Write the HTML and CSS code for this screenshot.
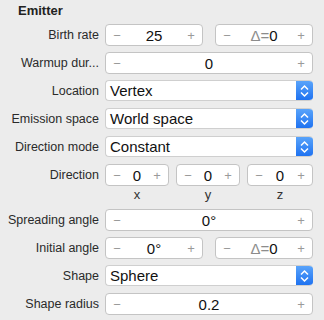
FILE: index.html
```html
<!DOCTYPE html>
<html>
<head>
    <title>Emitter</title>
    <link rel="stylesheet" href="styles.css">
</head>
<body>
<div class="inspector">
    <div class="section-title">Emitter</div>

    <div class="row">
        <label class="row-label">Birth rate</label>
        <div class="pair">
            <div class="stepper"><span class="step">−</span><span class="value">25</span><span class="step">+</span></div>
            <div class="stepper"><span class="step">−</span><span class="value"><span class="dim">Δ=</span>0</span><span class="step">+</span></div>
        </div>
    </div>

    <div class="row">
        <label class="row-label">Warmup dur...</label>
        <div class="stepper"><span class="step">−</span><span class="value">0</span><span class="step">+</span></div>
    </div>

    <div class="row">
        <label class="row-label">Location</label>
        <div class="popup"><span class="popup-text">Vertex</span><span class="popup-arrows"><svg width="17" height="22" viewBox="0 0 17 22"><path d="M5 9.5 L8.5 6 L12 9.5 M5 12.5 L8.5 16 L12 12.5" fill="none" stroke="#fff" stroke-width="1.5"/></svg></span></div>
    </div>

    <div class="row">
        <label class="row-label">Emission space</label>
        <div class="popup"><span class="popup-text">World space</span><span class="popup-arrows"><svg width="17" height="22" viewBox="0 0 17 22"><path d="M5 9.5 L8.5 6 L12 9.5 M5 12.5 L8.5 16 L12 12.5" fill="none" stroke="#fff" stroke-width="1.5"/></svg></span></div>
    </div>

    <div class="row">
        <label class="row-label">Direction mode</label>
        <div class="popup"><span class="popup-text">Constant</span><span class="popup-arrows"><svg width="17" height="22" viewBox="0 0 17 22"><path d="M5 9.5 L8.5 6 L12 9.5 M5 12.5 L8.5 16 L12 12.5" fill="none" stroke="#fff" stroke-width="1.5"/></svg></span></div>
    </div>

    <div class="row row-vector">
        <label class="row-label">Direction</label>
        <div class="triple">
            <div class="axis">
                <div class="stepper"><span class="step">−</span><span class="value">0</span><span class="step">+</span></div>
                <div class="axis-name">x</div>
            </div>
            <div class="axis">
                <div class="stepper"><span class="step">−</span><span class="value">0</span><span class="step">+</span></div>
                <div class="axis-name">y</div>
            </div>
            <div class="axis">
                <div class="stepper"><span class="step">−</span><span class="value">0</span><span class="step">+</span></div>
                <div class="axis-name">z</div>
            </div>
        </div>
    </div>

    <div class="row">
        <label class="row-label">Spreading angle</label>
        <div class="stepper"><span class="step">−</span><span class="value">0°</span><span class="step">+</span></div>
    </div>

    <div class="row">
        <label class="row-label">Initial angle</label>
        <div class="pair">
            <div class="stepper"><span class="step">−</span><span class="value">0°</span><span class="step">+</span></div>
            <div class="stepper"><span class="step">−</span><span class="value"><span class="dim">Δ=</span>0</span><span class="step">+</span></div>
        </div>
    </div>

    <div class="row">
        <label class="row-label">Shape</label>
        <div class="popup"><span class="popup-text">Sphere</span><span class="popup-arrows"><svg width="17" height="22" viewBox="0 0 17 22"><path d="M5 9.5 L8.5 6 L12 9.5 M5 12.5 L8.5 16 L12 12.5" fill="none" stroke="#fff" stroke-width="1.5"/></svg></span></div>
    </div>

    <div class="row">
        <label class="row-label">Shape radius</label>
        <div class="stepper"><span class="step">−</span><span class="value">0.2</span><span class="step">+</span></div>
    </div>
</div>
</body>
</html>
```

FILE: styles.css
```css
body {
    margin: 0;
    background-color: #ececec;
    font-family: "Liberation Sans", Arial, sans-serif;
    color: #222;
}
.inspector {
    padding: 3px 11px 0 5px;
    display: flex;
    flex-direction: column;
    gap: 6px;
}
.section-title {
    font-size: 13px;
    font-weight: bold;
    padding-left: 13px;
    height: 15px;
    line-height: 15px;
}
.row {
    display: grid;
    grid-template-columns: 94px 1fr;
    column-gap: 6px;
    align-items: start;
}
.row-label {
    font-size: 12.5px;
    line-height: 22px;
    text-align: right;
    white-space: nowrap;
    color: #2a2a2a;
}
.pair {
    display: grid;
    grid-template-columns: 1fr 1fr;
    column-gap: 12px;
}
.triple {
    display: grid;
    grid-template-columns: 64px 64px 1fr;
    column-gap: 7px;
}
.stepper {
    height: 22px;
    box-sizing: border-box;
    background-color: white;
    border: 1px solid #c4c4c4;
    border-radius: 4px;
    display: flex;
    align-items: center;
    padding: 0 7px;
}
.step {
    color: #9a9a9a;
    font-size: 13px;
    width: 8px;
    text-align: center;
}
.value {
    flex: 1;
    text-align: center;
    font-size: 15px;
    color: #111;
}
.dim {
    color: #8c8c8c;
}
.axis-name {
    text-align: center;
    font-size: 13px;
    line-height: 17px;
    color: #333;
}
.popup {
    height: 21px;
    box-sizing: border-box;
    display: flex;
    background-color: white;
    border: 1px solid #cfcfcf;
    border-right: none;
    border-radius: 4px;
    overflow: hidden;
}
.popup-text {
    flex: 1;
    font-size: 15px;
    line-height: 20px;
    padding-left: 4px;
    color: #111;
}
.popup-arrows {
    width: 17px;
    display: flex;
    align-items: center;
    justify-content: center;
    margin-top: -1px;
    height: 21px;
    background: linear-gradient(#5ca6fb, #1c70f0);
}
.popup-arrows svg {
    display: block;
}
```
